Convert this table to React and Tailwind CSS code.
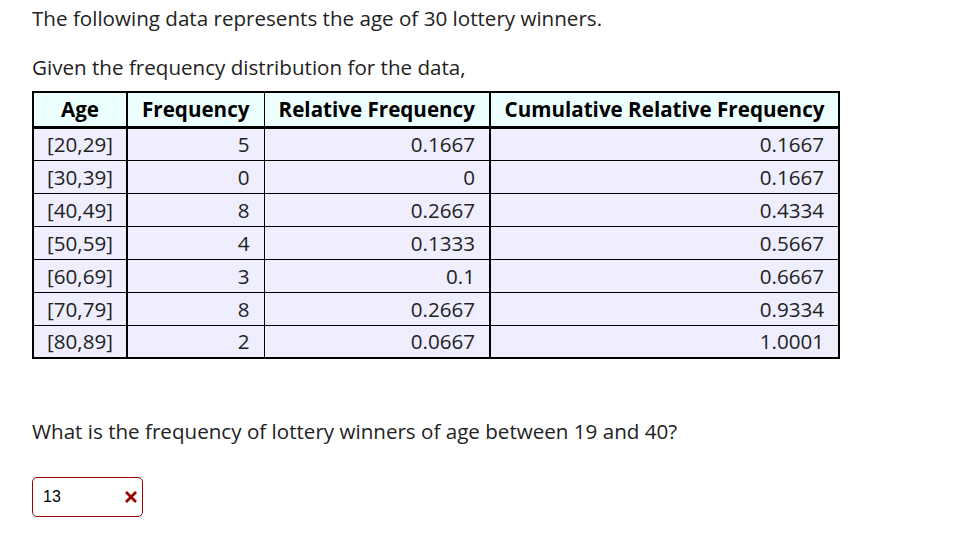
import React from "react";

const rows = [
  ["[20,29]", "5", "0.1667", "0.1667"],
  ["[30,39]", "0", "0", "0.1667"],
  ["[40,49]", "8", "0.2667", "0.4334"],
  ["[50,59]", "4", "0.1333", "0.5667"],
  ["[60,69]", "3", "0.1", "0.6667"],
  ["[70,79]", "8", "0.2667", "0.9334"],
  ["[80,89]", "2", "0.0667", "1.0001"],
];

export default function App() {
  return (
    <div
      className="min-h-[547px] bg-white text-[#222] pl-[32px] pt-[4px]"
      style={{ fontFamily: '"Open Sans", sans-serif' }}
    >
      <p className="text-[20.6px] leading-[28px]">
        The following data represents the age of 30 lottery winners.
      </p>
      <p className="text-[20.6px] leading-[28px] mt-[21px]">
        Given the frequency distribution for the data,
      </p>

      <table className="mt-[10px] border-collapse border-2 border-black text-[20.6px] text-[#222] table-fixed w-[806px]">
        <colgroup>
          <col className="w-[94px]" />
          <col className="w-[137px]" />
          <col className="w-[226px]" />
          <col className="w-[349px]" />
        </colgroup>
        <thead>
          <tr className="bg-[#eeffff] h-[35px] text-black">
            <th className="font-bold border-r-2 border-b-[3px] border-black text-center p-0">Age</th>
            <th className="font-bold border-r border-b-[3px] border-black text-center p-0">Frequency</th>
            <th className="font-bold border-r-2 border-b-[3px] border-black text-center p-0">Relative Frequency</th>
            <th className="font-bold border-b-[3px] border-black text-center p-0">Cumulative Relative Frequency</th>
          </tr>
        </thead>
        <tbody>
          {rows.map((r, i) => (
            <tr key={i} className="bg-[#eeeeff] h-[33px]">
              <td className="border-r-2 border-b border-black text-center p-0 leading-[26px]">{r[0]}</td>
              <td className="border-r border-b border-black text-right pr-[14px] leading-[26px]">{r[1]}</td>
              <td className="border-r-2 border-b border-black text-right pr-[14px] leading-[26px]">{r[2]}</td>
              <td className="border-b border-black text-right pr-[14px] leading-[26px]">{r[3]}</td>
            </tr>
          ))}
        </tbody>
      </table>

      <p className="text-[20.6px] leading-[28px] mt-[58px]">
        What is the frequency of lottery winners of age between 19 and 40?
      </p>

      <div className="mt-[32px] w-[111px] h-[40px] border border-[#990000] rounded-[5px] flex items-center justify-between pl-[10px] pr-[4px]">
        <span
          className="text-[16px] text-black"
          style={{ fontFamily: '"Liberation Sans", Arial, sans-serif' }}
        >
          13
        </span>
        <svg width="14" height="14" viewBox="0 0 14 14">
          <path d="M2 2 L12 12 M12 2 L2 12" stroke="#990000" strokeWidth="2.8" strokeLinecap="butt" />
        </svg>
      </div>
    </div>
  );
}
